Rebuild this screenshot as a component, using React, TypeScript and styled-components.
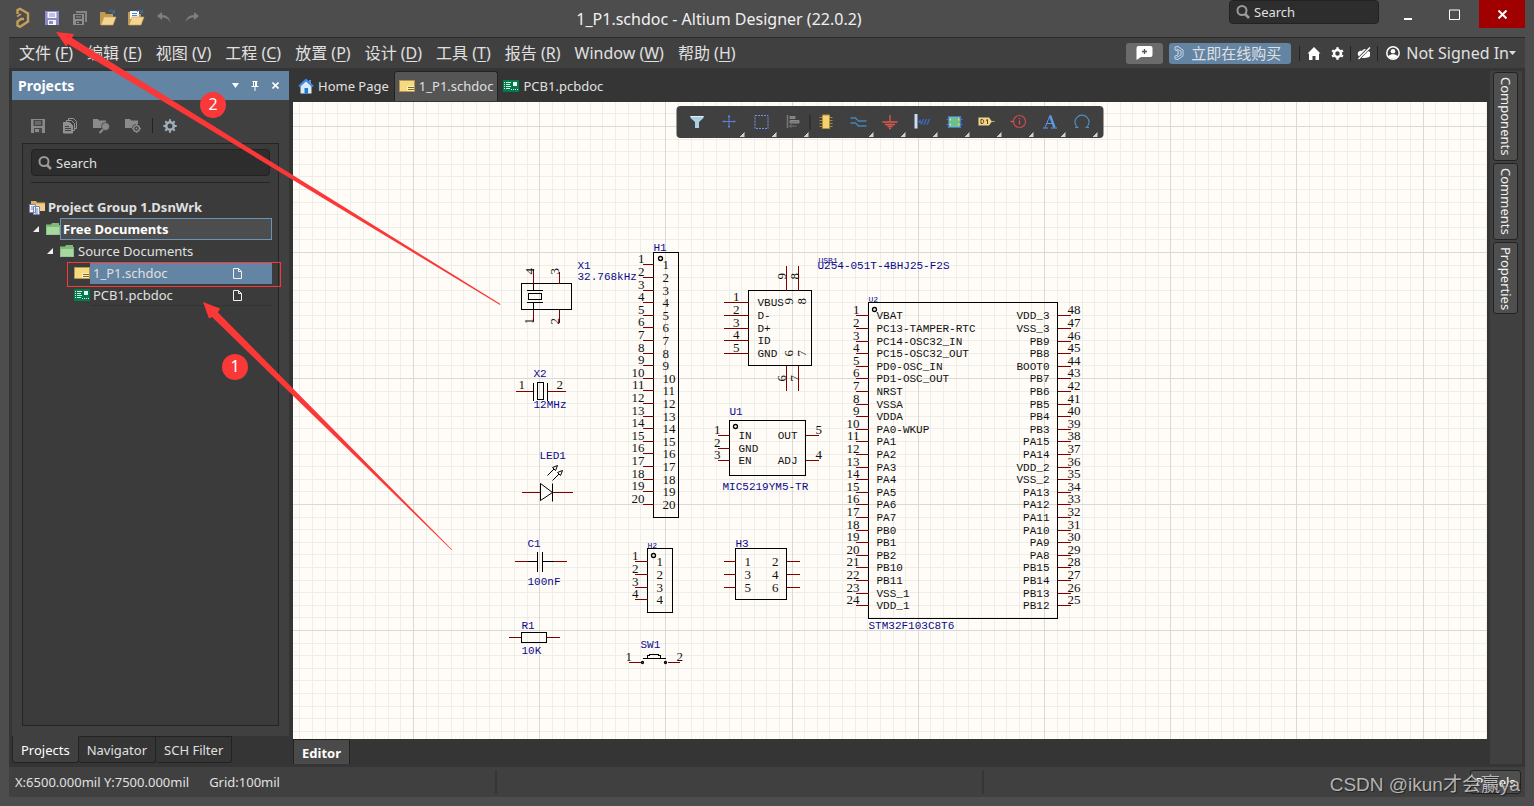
import React from "react";
import styled, { createGlobalStyle } from "styled-components";

const GlobalStyle = createGlobalStyle`
  * { box-sizing: border-box; }
  body {
    margin: 0;
    background: #4d4d4d;
    font-family: "Noto Sans", "Noto Sans CJK SC", sans-serif;
    font-size: 13px;
    color: #e0e0e0;
  }
  button, input { font: inherit; color: inherit; }
  button { background: none; border: 0; padding: 0; }
  svg { display: block; }
`;

const Page = styled.div`
  position: relative;
  display: flex;
  flex-direction: column;
  min-height: 100vh;
  padding: 0 9px 9px;
  overflow: hidden;
`;

/* ---------- title bar ---------- */

const TitleBar = styled.header`
  display: flex;
  align-items: flex-start;
  height: 37px;
`;

const QuickAccess = styled.div`
  display: flex;
  height: 35px;
  align-items: center;
`;

const IconButton = styled.button<{ $w?: number }>`
  display: flex;
  align-items: center;
  justify-content: center;
  width: ${(p) => p.$w ?? 28}px;
  height: 24px;
`;

const Title = styled.h1`
  flex: 1;
  margin: 0;
  padding-left: 4px;
  font-size: 16px;
  font-weight: 400;
  line-height: 38px;
  text-align: center;
  color: #f0f0f0;
`;

const SearchBox = styled.label<{ $compact?: boolean }>`
  display: flex;
  align-items: center;
  gap: 3px;
  width: ${(p) => (p.$compact ? "150px" : "auto")};
  height: ${(p) => (p.$compact ? 24 : 27)}px;
  padding: 0 5px;
  background: #2d2d2d;
  border: 1px solid #222;
  border-radius: 4px;
`;

const SearchInput = styled.input`
  min-width: 0;
  flex: 1;
  padding: 0;
  border: 0;
  outline: 0;
  background: none;
  font-size: 13px;
  &::placeholder { color: #e0e0e0; opacity: 1; }
`;

const WindowButtons = styled.div`
  display: flex;
  margin-left: 8px;
`;

const WindowButton = styled.button<{ $close?: boolean }>`
  display: flex;
  align-items: center;
  justify-content: center;
  width: 46px;
  height: 28px;
  padding-right: ${(p) => (p.$close ? 0 : 4)}px;
  background: ${(p) => (p.$close ? "#a00000" : "none")};
`;

/* ---------- application frame ---------- */

const Frame = styled.div`
  flex: 1;
  display: flex;
  flex-direction: column;
  border-top: 1px solid #2b2b2b;
  background: #353535;
`;

const MenuBar = styled.nav`
  display: flex;
  align-items: center;
  height: 30px;
  padding: 0 9px 0 10px;
  background: #404040;
  font-size: 16px;
`;

const MenuItems = styled.div`
  display: flex;
  flex: 1;
  gap: 14px;
`;

const MenuItem = styled.button`
  white-space: nowrap;
  line-height: 30px;
  u { text-underline-offset: 2px; }
`;

const NoteButton = styled.button`
  display: flex;
  align-items: center;
  justify-content: center;
  width: 37px;
  height: 21px;
  margin-right: 6px;
  border-radius: 3px;
  background: #6b6b6b;
`;

const BuyButton = styled.button`
  display: flex;
  align-items: center;
  gap: 7px;
  height: 21px;
  padding: 0 10px 0 5px;
  margin-right: 6px;
  border-radius: 3px;
  background: #6384a3;
  font-size: 15px;
  line-height: 20px;
`;

const Divider = styled.span<{ $m?: number }>`
  width: 1px;
  height: 15px;
  margin: 0 ${(p) => p.$m ?? 2}px;
  background: #222;
`;

const Account = styled.button`
  display: flex;
  align-items: center;
  gap: 6px;
  margin-left: 6px;
  white-space: nowrap;
`;

const AccountName = styled.span`
  display: flex;
  align-items: center;
`;

const Workspace = styled.main`
  flex: 1;
  display: flex;
  padding: 3px 3px 3px;
`;

/* ---------- projects panel ---------- */

const LeftDock = styled.aside`
  display: flex;
  flex-direction: column;
  width: 277px;
  flex: none;
  margin-right: 4px;
`;

const Panel = styled.section`
  flex: 1;
  display: flex;
  flex-direction: column;
  padding-bottom: 10px;
  background: #404040;
`;

const PanelHeader = styled.header`
  display: flex;
  align-items: center;
  height: 29px;
  padding: 0 4px 0 6px;
  background: #6384a3;
`;

const PanelTitle = styled.h2`
  flex: 1;
  margin: 0;
  font-size: 14px;
  color: #fff;
`;

const PanelTools = styled.div`
  display: flex;
  align-items: center;
  height: 43px;
  padding: 8px 0 0 10px;
`;

const PanelBox = styled.div`
  flex: 1;
  margin: 0 10px;
  padding: 5px 8px;
  border: 1px solid #242424;
  background: #3b3b3b;
`;

const PanelRule = styled.hr`
  height: 1px;
  margin: 6px 0 13px;
  border: 0;
  background: #242424;
`;

const Tree = styled.ul`
  margin: 0 -2px;
  padding: 0;
  list-style: none;
`;

const TreeRow = styled.li<{ $indent: number }>`
  display: flex;
  align-items: center;
  height: 22px;
  padding-left: ${(p) => p.$indent}px;
`;

const Twisty = styled.span`
  display: flex;
  justify-content: flex-end;
  width: 16px;
  padding-right: 7px;
`;

type LabelKind = "group" | "edit" | "folder" | "active" | "last";

const TreeLabel = styled.button<{ $kind: LabelKind }>`
  flex: 1;
  display: flex;
  align-items: center;
  justify-content: space-between;
  height: 22px;
  padding: 0 29px 0 ${(p) => (p.$kind === "group" ? 1 : p.$kind === "folder" ? 3 : 2)}px;
  border: 1px solid ${(p) => (p.$kind === "edit" ? "#6a93b8" : "transparent")};
  border-bottom-color: ${(p) =>
    p.$kind === "edit" ? "#6a93b8" : p.$kind === "last" ? "#333" : "transparent"};
  background: ${(p) =>
    p.$kind === "edit" ? "#4d4d4d" : p.$kind === "active" ? "#6384a3" : "none"};
  font-weight: ${(p) => (p.$kind === "group" || p.$kind === "edit" ? 700 : 400)};
  color: ${(p) => (p.$kind === "edit" ? "#fff" : "#e0e0e0")};
  text-align: left;
  line-height: 18px;
`;

const DockTabs = styled.div`
  display: flex;
  height: 28px;
`;

const DockTab = styled.button<{ $active?: boolean }>`
  height: 27px;
  padding: 0 8px;
  border: 1px solid #222;
  border-left-width: ${(p) => (p.$active ? 1 : 0)}px;
  border-top-color: ${(p) => (p.$active ? "#404040" : "#222")};
  border-radius: 0 0 3px 3px;
  background: ${(p) => (p.$active ? "#404040" : "#353535")};
  color: ${(p) => (p.$active ? "#fff" : "#e0e0e0")};
  white-space: nowrap;
`;

/* ---------- document area ---------- */

const Documents = styled.section`
  flex: 1;
  min-width: 0;
  display: flex;
  flex-direction: column;
`;

const DocTabs = styled.div`
  display: flex;
  height: 31px;
`;

const DocTab = styled.button<{ $active?: boolean }>`
  display: flex;
  align-items: center;
  gap: 4px;
  height: 30px;
  padding: 0 4px 1px;
  border: 1px solid ${(p) => (p.$active ? "#222" : "transparent")};
  border-width: 1px 1px 0;
  border-radius: 3px 3px 0 0;
  background: ${(p) => (p.$active ? "#555" : "none")};
  white-space: nowrap;
`;

const Canvas = styled.div`
  position: relative;
  flex: 1;
  min-height: 560px;
  background: #fffcf7;
`;

const Sheet = styled.svg`
  position: absolute;
  inset: 0;
  width: 100%;
  height: 100%;
`;

const ActiveBar = styled.div`
  position: absolute;
  top: 4px;
  left: 50%;
  transform: translateX(-50%);
  display: flex;
  align-items: center;
  height: 32px;
  padding: 0 5px;
  border-radius: 4px;
  background: #404040;
`;

const Tool = styled.button<{ $menu?: boolean }>`
  display: flex;
  align-items: center;
  justify-content: center;
  width: 32px;
  height: 32px;
  background: ${(p) =>
    p.$menu
      ? "linear-gradient(135deg, transparent 50%, #d0d0d0 50%) 26px 26px / 5px 5px no-repeat"
      : "none"};
`;

const EditorTabs = styled.div`
  height: 25px;
`;

const EditorTab = styled.button`
  height: 25px;
  padding: 1px 8px 0;
  border: 1px solid #222;
  border-bottom: 0;
  background: #4a4a4a;
  color: #fff;
  font-weight: 700;
`;

const RightDock = styled.aside`
  display: flex;
  flex-direction: column;
  gap: 2px;
  width: 32px;
  flex: none;
  margin-left: 3px;
  padding: 1px 4px 0 3px;
  background: #404040;
`;

const SideTab = styled.button<{ $h: number }>`
  display: flex;
  align-items: center;
  height: ${(p) => p.$h}px;
  padding: 4px 3px 0 4px;
  border: 1px solid #222;
  border-radius: 3px;
  background: #4f4f4f;
  color: #f0f0f0;
  writing-mode: vertical-rl;
  line-height: 16px;
`;

/* ---------- status bar ---------- */

const StatusBar = styled.footer`
  display: grid;
  grid-template-columns: 488px 487px 1fr auto;
  align-items: center;
  height: 30px;
  padding-right: 4px;
  background: #404040;
`;

const StatusCell = styled.div`
  display: flex;
  align-items: center;
  gap: 20px;
  height: 24px;
  padding-left: 6px;
  border-right: 2px solid #353535;
`;

const PanelsButton = styled.button`
  grid-column: 4;
  width: 51px;
  height: 24px;
  border: 1px solid #222;
  border-radius: 3px;
  background: #4f4f4f;
  color: #fff;
`;

const Watermark = styled.div`
  position: absolute;
  right: 14px;
  bottom: 8px;
  font-family: "Liberation Sans", "Noto Sans CJK SC", sans-serif;
  font-size: 19px;
  line-height: 26px;
  color: rgba(205, 205, 205, 0.85);
  text-shadow: 1px 1px 1px #222;
  pointer-events: none;
`;

const Annotations = styled.svg`
  position: absolute;
  top: 0;
  left: 0;
  pointer-events: none;
`;

/* ---------- icons ---------- */

const Magnifier = () => (
  <svg width="16" height="16" viewBox="0 0 16 16" fill="none" stroke="#9a9a9a" aria-hidden>
    <circle cx="7" cy="6.5" r="4.5" strokeWidth="2" />
    <path d="M10 10l4 4" strokeWidth="2.6" />
  </svg>
);

const Logo = () => (
  <svg width="18" height="22" viewBox="0 0 18 22" fill="none" stroke="#c3a05a" strokeWidth="2.4">
    <path d="M3.500 7V3L6 1.800l8 4.700v8L6 19.800 3.500 18.500v-4L7 12h3" />
    <path d="M3 9.500l4-2.500" strokeWidth="1.600" />
  </svg>
);

const Floppy = ({ a = "#8c8cc8", b = "#f4f4ff" }: { a?: string; b?: string }) => (
  <svg width="14" height="14" viewBox="0 0 14 14">
    <path d="M0 0h14v14H0z" fill={a} />
    <path d="M2.5 1h9v6h-9zM3 9h8v5H3z" fill={b} />
    <path d="M4 3h6M4 5h6" stroke={a} />
    <path d="M4 10h4v3H4z" fill={a} />
    <path d="M8.500 10h2v3h-2z" fill={b} />
  </svg>
);

const FloppyAll = () => (
  <svg width="16" height="16" viewBox="0 0 16 16" fill="none">
    <path d="M4 1h11v11h-2V3H4z" fill="#858585" />
    <path d="M1 4h11v11H1z" fill="#8e8e8e" />
    <path d="M3 5h7v4H3zM4 11h6v3H4z" fill="#4d4d4d" />
    <path d="M4 7h5M5 12.500h2" stroke="#9a9a9a" />
  </svg>
);

const FolderOpen = ({ doc }: { doc?: boolean }) => (
  <svg width="18" height="17" viewBox="0 0 18 17">
    <path d="M1 3h5l1 2h7v4H5l-3 7H1z" fill="#c09a50" />
    {doc && <path d="M3 2h9v8H3z" fill="#f4f7ff" />}
    {doc && <path d="M5 4.500h5M5 6.500h5" stroke="#5a86c0" />}
    <path d="M5 8h12l-3 8H2z" fill="#f4d592" stroke="#c9a45b" strokeWidth=".6" />
    <path d="M10 2.500c2-2 4-1.500 5 .5M15.500.8v2.800h-3" fill="none" stroke="#3f6c98" strokeWidth="1.200" />
  </svg>
);

const Undo = ({ flip }: { flip?: boolean }) => (
  <svg width="16" height="14" viewBox="0 0 16 14">
    <g transform={flip ? "matrix(-1 0 0 1 16 0)" : undefined}>
      <path d="M1 5l5-4v3c5 0 8 3 8.500 8C13 8 10 6.500 6 6.500V9z" fill="#7f7f7f" />
    </g>
  </svg>
);

const Copies = () => (
  <svg width="14" height="16" viewBox="0 0 14 16" fill="none" stroke="#949494">
    <path d="M5.500 2.500v-2h5l3 3v7h-2" />
    <path d="M3.500 4.500v-2h5l3 3v7h-2" />
    <path d="M.5 4.500h6l3 3v7.500h-9z" fill="#8e8e8e" />
    <path d="M2 8.500h4M2 10.500h6M2 12.500h6" stroke="#444" />
  </svg>
);

const FolderTool = ({ gear }: { gear?: boolean }) => (
  <svg width="17" height="16" viewBox="0 0 17 16" fill="#8a8a8a">
    <path d="M0 1h5l1 1.500h7V10H0z" />
    {gear ? (
      <g>
        <circle cx="11.500" cy="10.500" r="4.500" fill="#404040" />
        <circle cx="11.500" cy="10.500" r="3" fill="none" stroke="#8a8a8a" strokeWidth="1.600" />
        <circle cx="11.500" cy="10.500" r="1" />
        <path d="M11.500 6v9M7 10.500h9" stroke="#8a8a8a" strokeDasharray="1.500 6" />
      </g>
    ) : (
      <g>
        <circle cx="12.500" cy="8.500" r="4" stroke="#404040" strokeWidth=".8" />
        <path d="M10 11.500l-3.500 3.500" stroke="#8a8a8a" strokeWidth="2" />
      </g>
    )}
  </svg>
);

const Gear = ({ color, size = 14 }: { color: string; size?: number }) => (
  <svg width={size} height={size} viewBox="0 0 14 14" fill="none" stroke={color}>
    <circle cx="7" cy="7" r="3.700" strokeWidth="2.600" />
    <path
      d="M7 .3v2M7 11.700v2M1.200 3.700l1.700 1M11.100 9.300l1.700 1M1.200 10.300l1.700-1M11.100 4.700l1.700-1"
      strokeWidth="2.600"
    />
  </svg>
);

const FineGear = () => (
  <svg width="14" height="14" viewBox="0 0 14 14" fill="none" stroke="#9fb0bb">
    <circle cx="7" cy="7" r="3.800" strokeWidth="2.600" />
    <path
      d="M7 .3v2M7 11.700v2M.3 7h2M11.700 7h2M2.300 2.300l1.400 1.400M10.300 10.300l1.400 1.400M2.300 11.700l1.400-1.400M10.300 3.700l1.400-1.400"
      strokeWidth="2"
    />
  </svg>
);

const SchIcon = () => (
  <svg width="16" height="12" viewBox="0 0 16 12">
    <path d="M.5.5h15v11H.5z" fill="#f3da83" stroke="#b89548" />
    <path d="M8 6h7v5H8z" fill="#fff0b0" />
    <path d="M9 7.500h6M9 9.500h6" stroke="#7d6632" />
  </svg>
);

const PcbIcon = () => (
  <svg width="16" height="12" viewBox="0 0 16 12">
    <path d="M0 0h16v12H0z" fill="#067a4d" />
    <path d="M10 2h4v4h-4z" fill="#e8fff2" />
    <path
      d="M1 2.500h1M3 2.500h5M1 4.500h1M3 4.500h4M1 6.500h1M3 6.500h5M1 8.500h1M3 8.500h4M8 9.500h1M10 9.500h1M12 9.500h1M14 9.500h1"
      stroke="#c7f5dc"
    />
  </svg>
);

const GreenFolder = () => (
  <svg width="14" height="12" viewBox="0 0 14 12">
    <path d="M0 1.500h5L6 0h7v2h1v10H0z" fill="#7fba7b" />
    <path d="M1 4h12l.5 7.500H.5z" fill="#a6d9a0" />
  </svg>
);

const GroupIcon = () => (
  <svg width="17" height="15" viewBox="0 0 17 15">
    <path d="M2 1h5l1 1.500h8V11H2z" fill="#dcae62" />
    <path d="M4 4h12v7H4z" fill="#f0cf8d" />
    <path d="M.5 4.500h6v8h-6zM4.500 6.500h6v8h-6z" fill="#eef2ff" stroke="#7b86ad" />
    <path d="M6 9h3M6 11h3M6 13h3M2 7h2M2 9h2" stroke="#7b86ad" />
  </svg>
);

const Expanded = () => (
  <svg width="6" height="6" viewBox="0 0 6 6">
    <path d="M6 0v6H0z" fill="#f0f0f0" />
  </svg>
);

const FileIcon = () => (
  <svg width="9" height="11" viewBox="0 0 9 11" fill="none" stroke="#f0f0f0">
    <path d="M.5.5h5l3 3v7h-8zM5.500.5v3h3" />
  </svg>
);

const HomeColor = () => (
  <svg width="16" height="16" viewBox="0 0 16 16">
    <path d="M11 2h2v5h-2z" fill="#7c93ad" />
    <path d="M2.500 8L8 3l5.500 5v7.500h-11z" fill="#dce9f7" />
    <path d="M6.500 10h3.500v5.500H6.500z" fill="#1d78e0" />
    <path d="M1 8.500L8 1.800l7 6.700" fill="none" stroke="#3a8df0" strokeWidth="2" />
  </svg>
);

const Note = () => (
  <svg width="17" height="14" viewBox="0 0 17 14">
    <path d="M2.500 0h12A2 2 0 0 1 16.500 2v7a2 2 0 0 1-2 2H5l-4.500 3V2a2 2 0 0 1 2-2z" fill="#fff" />
    <path d="M8.500 3v5M6 5.500h5" stroke="#555" strokeWidth="1.400" />
  </svg>
);

const HomeWhite = () => (
  <svg width="14" height="13" viewBox="0 0 14 13" fill="#fff">
    <path d="M7 0l6.500 6.500H12V13H8.500V9h-3v4H2V6.500H.5z" />
  </svg>
);

const SyncOff = () => (
  <svg width="14" height="13" viewBox="0 0 14 13">
    <path d="M1 8c-1-3 2-5 4-4 2-3 6-2 6 0l2 1v4c-1 2-6 2-10 2z" fill="#fff" />
    <path d="M1 12.500L12.500.5" stroke="#404040" strokeWidth="3" />
    <path d="M1.500 12L13 .5" stroke="#fff" strokeWidth="1.500" />
  </svg>
);

const User = () => (
  <svg width="14" height="14" viewBox="0 0 14 14">
    <circle cx="7" cy="7" r="6.200" fill="none" stroke="#fff" strokeWidth="1.500" />
    <circle cx="7" cy="5.200" r="2.300" fill="#fff" />
    <path d="M2.500 10c2-2.500 7-2.500 9 0-2 3.500-7 3.500-9 0z" fill="#fff" />
  </svg>
);

const BuyMark = () => (
  <svg width="10" height="14" viewBox="0 0 10 14" fill="none" stroke="#c8d6e4">
    <path d="M1 4V1l3-.5L9 4v6l-5 3.500L1 13v-3l3-1V5z" />
    <path d="M2.500 3L7 5v4l-4.500 2.500M4 7h1" />
  </svg>
);

const toolIcons: { name: string; menu?: boolean; art: React.ReactNode }[] = [
  {
    name: "Filter",
    art: (
      <g>
        <path d="M2 3h13v2L10.500 9v6h-4V9L2 5z" fill="#a9cfe0" />
        <path d="M2 3.500h13" stroke="#dff1fa" />
      </g>
    ),
  },
  {
    name: "Move",
    menu: true,
    art: <path d="M8.500 2v13M2 8.500h13M7.500 3.500h2M7.500 13.500h2M3.500 7.500v2M13.500 7.500v2" stroke="#5f83d8" fill="none" />,
  },
  {
    name: "Select area",
    menu: true,
    art: <path d="M2.500 2.500h13v13h-13z" stroke="#6f90ea" strokeDasharray="2 1" fill="none" />,
  },
  {
    name: "Align",
    menu: true,
    art: (
      <g>
        <path d="M3 2v13" stroke="#777" strokeWidth="1.500" />
        <path d="M5.500 3.500h5v2h-5zM5.500 7.500h9v2.500h-9z" fill="#777" stroke="#8c8c8c" />
        <path d="M5 13h7M7 11.500L5 13l2 1.500" stroke="#777" fill="none" />
      </g>
    ),
  },
  {
    name: "Part",
    art: (
      <g>
        <path d="M2 4.500h13M2 7.500h13M2 10.500h13M2 13.500h13" stroke="#a98638" />
        <path d="M5 2h7v13.500H5z" fill="#f6d271" stroke="#b48f3e" />
      </g>
    ),
  },
  {
    name: "Wire",
    menu: true,
    art: <path d="M1 5h5l3 3h8M1 10h5l3 3h8" stroke="#4a83b5" strokeWidth="1.400" fill="none" />,
  },
  {
    name: "Ground",
    menu: true,
    art: <path d="M8.500 2v7M1 9h15M3.500 11.500h10M6 13.500h5M7.500 15.500h2" stroke="#e4554c" strokeWidth="1.300" />,
  },
  {
    name: "Harness",
    menu: true,
    art: (
      <g>
        <path d="M1 1h3v14.500H1z" fill="#c9dcf7" />
        <path
          d="M4 8.500h3.500M6.500 6.500v4M8 11l2-5M11 11l2-5M14 11l2-5M7 11h1.500M10 11h1.500M13 11h1.500"
          stroke="#3f6cd0"
          strokeWidth="1.200"
        />
      </g>
    ),
  },
  {
    name: "Sheet symbol",
    menu: true,
    art: (
      <g>
        <path d="M3 3.500h12v11H3z" fill="#6cc08e" stroke="#4676d8" strokeWidth="1.200" />
        <path d="M1 6.500h3M1 11.500h3M14 6.500h3M14 11.500h3" stroke="#4676d8" />
        <path d="M4 6.500h1.500M4 11.500h1.500M12.500 6.500H14M12.500 11.500H14" stroke="#f0e060" strokeWidth="2" />
      </g>
    ),
  },
  {
    name: "Port",
    menu: true,
    art: (
      <g>
        <path d="M1 4.500h10.500l3 4-3 4H1z" fill="#f2d58a" />
        <path d="M14 8.500h3" stroke="#d2a94f" />
        <path d="M3.500 6.500v4h1.500c1.500 0 1.500-4 0-4zM8.500 7.500l1.500-1v4.500" stroke="#5b4520" fill="none" />
      </g>
    ),
  },
  {
    name: "Directive",
    menu: true,
    art: (
      <g>
        <circle cx="10" cy="8.500" r="6" stroke="#c94a4a" strokeWidth="1.200" fill="none" />
        <path d="M1 8.500h3M10 7.500v4M10 5v1.300" stroke="#d84e4e" strokeWidth="1.400" />
      </g>
    ),
  },
  {
    name: "Text",
    menu: true,
    art: (
      <g fill="none" stroke="#5c9ae6">
        <path d="M3.500 14.500L8.500 2.500" />
        <path d="M8.500 2.500l4.500 12" strokeWidth="2.400" />
        <path d="M5.500 10.500h6M1.500 15h5M9.500 15h6" />
      </g>
    ),
  },
  {
    name: "Arc",
    menu: true,
    art: <path d="M1.500 14.500h2.500A7 7 0 1 1 13 14.500h2.500" stroke="#4f8cc4" strokeWidth="1.200" fill="none" />,
  },
];

/* ---------- schematic ---------- */

const INK = "#111";
const WIRE = "#800000";
const NAVY = "#0a0a8c";
const PITCH = 12.6;

const Label = styled.text`
  font-family: "Liberation Mono", monospace;
  font-size: 11px;
  fill: ${INK};
`;

const Designator = styled(Label)`
  fill: ${NAVY};
`;

const TinyDesignator = styled(Designator)`
  font-size: 8px;
`;

const PinNumber = styled.text`
  font-family: "Liberation Serif", serif;
  font-size: 13px;
  fill: ${INK};
`;

const row = (y: number, i: number) => Math.round(y + i * PITCH);

const Wire = ({ d, c = WIRE }: { d: string; c?: string }) => (
  <path d={d} stroke={c} fill="none" shapeRendering="crispEdges" />
);

const Body = ({ x, y, w, h }: { x: number; y: number; w: number; h: number }) => (
  <rect x={x} y={y} width={w} height={h} fill="none" stroke="#000" shapeRendering="crispEdges" />
);

const Dot = ({ x, y, r = 2 }: { x: number; y: number; r?: number }) => (
  <circle cx={x} cy={y} r={r} fill="none" stroke="#000" strokeWidth="1.300" />
);

type PinsProps = {
  x: number;
  y: number;
  len: number;
  numbers?: (number | null)[];
  labels: (string | null)[];
  side?: "left" | "right";
  numberGap: number;
  labelGap: number;
  digits?: boolean;
};

const Pins = ({ x, y, len, numbers, labels, side = "left", numberGap, labelGap, digits }: PinsProps) => {
  const dir = side === "left" ? -1 : 1;
  const Text = digits ? PinNumber : Label;
  return (
    <g>
      {labels.map((l, i) => {
        if (l === null) return null;
        const py = row(y, i);
        return (
          <g key={i}>
            <Wire d={`M${x} ${py}h${dir * len}`} />
            {numbers && (
              <PinNumber x={x + dir * numberGap} y={py - 2} textAnchor={side === "left" ? "end" : "start"}>
                {numbers[i]}
              </PinNumber>
            )}
            <Text x={x - dir * labelGap} y={py + (digits ? 4 : 3)} textAnchor={side === "left" ? "start" : "end"}>
              {l}
            </Text>
          </g>
        );
      })}
    </g>
  );
};

const Turned = ({ x, y, children }: { x: number; y: number; children: React.ReactNode }) => (
  <PinNumber transform={`translate(${x} ${y}) rotate(-90)`}>{children}</PinNumber>
);

const count = (n: number) => Array.from({ length: n }, (_, i) => i + 1);

const mcuLeft =
  "VBAT PC13-TAMPER-RTC PC14-OSC32_IN PC15-OSC32_OUT PD0-OSC_IN PD1-OSC_OUT NRST VSSA VDDA PA0-WKUP PA1 PA2 PA3 PA4 PA5 PA6 PA7 PB0 PB1 PB2 PB10 PB11 VSS_1 VDD_1".split(
    " "
  );
const mcuRight =
  "VDD_3 VSS_3 PB9 PB8 BOOT0 PB7 PB6 PB5 PB4 PB3 PA15 PA14 VDD_2 VSS_2 PA13 PA12 PA11 PA10 PA9 PA8 PB15 PB14 PB13 PB12".split(
    " "
  );

const GridLines = () => {
  const minor: string[] = [];
  const major: string[] = [];
  for (let i = -10; i < 240; i++) {
    const d = `M${Math.round(413 + i * 12.62)} 0v3000`;
    (i % 10 === 0 ? major : minor).push(d);
  }
  for (let i = -2; i < 200; i++) {
    const d = `M0 ${Math.round(126 + i * 12.6)}h4000`;
    (i % 10 === 0 ? major : minor).push(d);
  }
  return (
    <g fill="none" shapeRendering="crispEdges">
      <path d={minor.join("")} stroke="#ededea" />
      <path d={major.join("")} stroke="#d9d9d6" />
    </g>
  );
};

const Schematic = () => (
  <Sheet aria-label="Schematic sheet">
    <g transform="translate(-292.500 -101.500)">
      <GridLines />

      <Body x={521} y={283} w={50} h={26} />
      <Wire d="M533 268v15M559 271v12M533 309v12M559 309v13" />
      <Wire c="#000" d="M533 283v7M526 290h16M528 293h13v6h-13zM526 302h16M533 302v7" />
      <Turned x={533} y={274}>4</Turned>
      <Turned x={558} y={274}>3</Turned>
      <Turned x={532} y={324}>1</Turned>
      <Turned x={558} y={324}>2</Turned>
      <Designator x={577} y={268}>X1</Designator>
      <Designator x={577} y={279}>32.768kHz</Designator>

      <Wire d="M515 391h18M547 391h18" />
      <Wire c="#000" d="M533 382v18M547 382v18M537 382h6v17h-6z" />
      <PinNumber x={518} y={388}>1</PinNumber>
      <PinNumber x={556} y={388}>2</PinNumber>
      <Designator x={533} y={376}>X2</Designator>
      <Designator x={533} y={407}>12MHz</Designator>

      <Designator x={539} y={458}>LED1</Designator>
      <Wire d="M521 492h19M552 492h20" />
      <path d="M540 483v17l12-8zM552 483v18" fill="none" stroke="#000" />
      <path d="M547 475l9-9M552 480l9-9" stroke="#000" />
      <path d="M557 465l-2 5-3-3zM562 470l-2 5-3-3z" fill="#fff" stroke="#000" />

      <Designator x={527} y={546}>C1</Designator>
      <Wire d="M514 561h13M553 561h13" />
      <Wire c="#000" d="M527 561h10M542 561h11M537 551v20M542 551v20" />
      <Designator x={527} y={584}>100nF</Designator>

      <Designator x={521} y={628}>R1</Designator>
      <Wire d="M508 637h13M546 637h13" />
      <Body x={521} y={632} w={25} h={10} />
      <Designator x={521} y={653}>10K</Designator>

      <Designator x={653} y={250}>H1</Designator>
      <Body x={653} y={252} w={25} h={265} />
      <Dot x={660} y={258} />
      <Pins x={653} y={264.4} len={11} numbers={count(20)} labels={count(20).map(String)} numberGap={9} labelGap={9} digits />

      <TinyDesignator x={647} y={547}>H2</TinyDesignator>
      <Body x={647} y={548} w={25} h={64} />
      <Dot x={653} y={555} />
      <Pins x={647} y={561.3} len={13} numbers={count(4)} labels={count(4).map(String)} numberGap={9} labelGap={9} digits />

      <Designator x={640} y={647}>SW1</Designator>
      <Wire d="M628 662h12M667 662h12" />
      <Wire c="#000" d="M642 658h23M647 658v-3h2v-1h9v1h2v3" />
      <Dot x={642} y={662} r={1} />
      <Dot x={665} y={662} r={1} />
      <PinNumber x={625} y={660}>1</PinNumber>
      <PinNumber x={676} y={660}>2</PinNumber>

      <Body x={748} y={290} w={63} h={75} />
      <Wire d="M786 265v25M798 265v25M786 365v25M798 365v25" />
      <Pins x={748} y={302.4} len={25} numbers={count(5)} labels={["VBUS", "D-", "D+", "ID", "GND"]} numberGap={9} labelGap={9} />
      <Turned x={785} y={279}>9</Turned>
      <Turned x={798} y={279}>8</Turned>
      <Turned x={792} y={304}>9</Turned>
      <Turned x={805} y={304}>8</Turned>
      <Turned x={792} y={356}>6</Turned>
      <Turned x={805} y={356}>7</Turned>
      <Turned x={785} y={381}>6</Turned>
      <Turned x={798} y={381}>7</Turned>
      <TinyDesignator x={818} y={262}>USB1</TinyDesignator>
      <Designator x={817} y={268}>U254-051T-4BHJ25-F2S</Designator>

      <Designator x={729} y={414}>U1</Designator>
      <Body x={729} y={420} w={76} h={55} />
      <Dot x={735} y={426} />
      <Pins x={729} y={435} len={12} numbers={count(3)} labels={["IN", "GND", "EN"]} numberGap={9} labelGap={9} />
      <Pins x={805} y={435} len={13} side="right" numbers={[5, null, 4]} labels={["OUT", null, "ADJ"]} numberGap={10} labelGap={8} />
      <Designator x={722} y={489}>MIC5219YM5-TR</Designator>

      <Designator x={735} y={546}>H3</Designator>
      <Body x={735} y={548} w={51} h={51} />
      <Pins x={735} y={561.3} len={12} labels={["1", "3", "5"]} numberGap={0} labelGap={9} digits />
      <Pins x={786} y={561.3} len={13} side="right" labels={["2", "4", "6"]} numberGap={0} labelGap={8} digits />

      <TinyDesignator x={868} y={301}>U2</TinyDesignator>
      <Body x={868} y={302} w={189} h={316} />
      <Dot x={874} y={309} />
      <Pins x={868} y={315.4} len={13} numbers={count(24)} labels={mcuLeft} numberGap={9} labelGap={8} />
      <Pins
        x={1057}
        y={315.4}
        len={13}
        side="right"
        numbers={count(24).map((n) => 49 - n)}
        labels={mcuRight}
        numberGap={10}
        labelGap={8}
      />
      <Designator x={868} y={628}>STM32F103C8T6</Designator>
    </g>
  </Sheet>
);

/* ---------- page ---------- */

const menus: [string, string][] = [
  ["文件", "F"],
  ["编辑", "E"],
  ["视图", "V"],
  ["工程", "C"],
  ["放置", "P"],
  ["设计", "D"],
  ["工具", "T"],
  ["报告", "R"],
  ["Window", "W"],
  ["帮助", "H"],
];

const Badge = styled.text`
  font-size: 16px;
  fill: #fff;
  text-anchor: middle;
`;

export default function App() {
  return (
    <>
      <GlobalStyle />
      <Page>
        <TitleBar>
          <QuickAccess>
            <IconButton aria-label="Altium"><Logo /></IconButton>
            <IconButton $w={29} aria-label="Save"><Floppy /></IconButton>
            <IconButton aria-label="Save all"><FloppyAll /></IconButton>
            <IconButton aria-label="Open"><FolderOpen /></IconButton>
            <IconButton aria-label="Open project"><FolderOpen doc /></IconButton>
            <IconButton aria-label="Undo"><Undo /></IconButton>
            <IconButton $w={27} aria-label="Redo"><Undo flip /></IconButton>
          </QuickAccess>
          <Title>1_P1.schdoc - Altium Designer (22.0.2)</Title>
          <SearchBox $compact>
            <Magnifier />
            <SearchInput placeholder="Search" aria-label="Search commands" />
          </SearchBox>
          <WindowButtons>
            <WindowButton aria-label="Minimize">
              <svg width="8" height="12"><path d="M0 11h8" stroke="#fff" strokeWidth="2" /></svg>
            </WindowButton>
            <WindowButton aria-label="Maximize">
              <svg width="11" height="11"><path d="M.5 1h10v9.500H.5z" fill="none" stroke="#fff" /></svg>
            </WindowButton>
            <WindowButton $close aria-label="Close">
              <svg width="9" height="9"><path d="M.5.5l8 8M8.500.5l-8 8" stroke="#fff" strokeWidth="2" /></svg>
            </WindowButton>
          </WindowButtons>
        </TitleBar>

        <Frame>
          <MenuBar>
            <MenuItems>
              {menus.map(([name, key]) => (
                <MenuItem key={key}>
                  {name} (<u>{key}</u>)
                </MenuItem>
              ))}
            </MenuItems>
            <NoteButton aria-label="Comment"><Note /></NoteButton>
            <BuyButton><BuyMark />立即在线购买</BuyButton>
            <Divider />
            <IconButton $w={24} aria-label="Home"><HomeWhite /></IconButton>
            <IconButton $w={22} aria-label="Settings"><Gear color="#fff" size={13} /></IconButton>
            <Divider />
            <IconButton $w={22} aria-label="Offline"><SyncOff /></IconButton>
            <Divider />
            <Account>
              <User />
              <AccountName>
                Not Signed In
                <svg width="7" height="4"><path d="M0 0h7L3.500 4z" fill="#ddd" /></svg>
              </AccountName>
            </Account>
          </MenuBar>

          <Workspace>
            <LeftDock>
              <Panel>
                <PanelHeader>
                  <PanelTitle>Projects</PanelTitle>
                  <IconButton $w={20} aria-label="Panel menu">
                    <svg width="7" height="5"><path d="M0 0h7L3.500 5z" fill="#fff" /></svg>
                  </IconButton>
                  <IconButton $w={20} aria-label="Pin panel">
                    <svg width="8" height="10" fill="none" stroke="#fff">
                      <path d="M1.500.5h5M2.500.5v5M5.500.5v5M.5 5.500h7M4 6v4" />
                      <path d="M5 0v6" strokeWidth="2" />
                    </svg>
                  </IconButton>
                  <IconButton $w={20} aria-label="Close panel">
                    <svg width="7" height="7"><path d="M.5.5l6 6M6.500.5l-6 6" stroke="#fff" strokeWidth="1.600" /></svg>
                  </IconButton>
                </PanelHeader>
                <PanelTools>
                  <IconButton $w={32} aria-label="Save document"><Floppy a="#8a8a8a" b="#484848" /></IconButton>
                  <IconButton $w={31} aria-label="Copy"><Copies /></IconButton>
                  <IconButton $w={32} aria-label="Find in folder"><FolderTool /></IconButton>
                  <IconButton $w={32} aria-label="Folder options"><FolderTool gear /></IconButton>
                  <Divider $m={3} />
                  <IconButton aria-label="Panel settings"><FineGear /></IconButton>
                </PanelTools>
                <PanelBox>
                  <SearchBox>
                    <Magnifier />
                    <SearchInput placeholder="Search" aria-label="Search projects" />
                  </SearchBox>
                  <PanelRule />
                  <Tree>
                    <TreeRow $indent={0}>
                      <GroupIcon />
                      <TreeLabel $kind="group">Project Group 1.DsnWrk</TreeLabel>
                    </TreeRow>
                    <TreeRow $indent={1}>
                      <Twisty><Expanded /></Twisty>
                      <GreenFolder />
                      <TreeLabel $kind="edit">Free Documents</TreeLabel>
                    </TreeRow>
                    <TreeRow $indent={15}>
                      <Twisty><Expanded /></Twisty>
                      <GreenFolder />
                      <TreeLabel $kind="folder">Source Documents</TreeLabel>
                    </TreeRow>
                    <TreeRow $indent={45}>
                      <SchIcon />
                      <TreeLabel $kind="active">1_P1.schdoc<FileIcon /></TreeLabel>
                    </TreeRow>
                    <TreeRow $indent={45}>
                      <PcbIcon />
                      <TreeLabel $kind="last">PCB1.pcbdoc<FileIcon /></TreeLabel>
                    </TreeRow>
                  </Tree>
                </PanelBox>
              </Panel>
              <DockTabs>
                <DockTab $active>Projects</DockTab>
                <DockTab>Navigator</DockTab>
                <DockTab>SCH Filter</DockTab>
              </DockTabs>
            </LeftDock>

            <Documents>
              <DocTabs>
                <DocTab><HomeColor />Home Page</DocTab>
                <DocTab $active><SchIcon />1_P1.schdoc</DocTab>
                <DocTab><PcbIcon />PCB1.pcbdoc</DocTab>
              </DocTabs>
              <Canvas>
                <Schematic />
                <ActiveBar>
                  {toolIcons.map((t, i) => (
                    <React.Fragment key={t.name}>
                      {i === 4 && <Divider $m={0} />}
                      <Tool $menu={t.menu} aria-label={t.name}>
                        <svg width="18" height="18" viewBox="0 0 18 18">{t.art}</svg>
                      </Tool>
                    </React.Fragment>
                  ))}
                </ActiveBar>
              </Canvas>
              <EditorTabs>
                <EditorTab>Editor</EditorTab>
              </EditorTabs>
            </Documents>

            <RightDock>
              <SideTab $h={89}>Components</SideTab>
              <SideTab $h={77}>Comments</SideTab>
              <SideTab $h={72}>Properties</SideTab>
            </RightDock>
          </Workspace>

          <StatusBar>
            <StatusCell>
              <span>X:6500.000mil Y:7500.000mil</span>
              <span>Grid:100mil</span>
            </StatusCell>
            <StatusCell />
            <PanelsButton>Panels</PanelsButton>
          </StatusBar>
        </Frame>

        <Watermark>CSDN @ikun才会赢ya</Watermark>

        <Annotations width="520" height="570" fill="#fa3838">
          <path d="M56 32L74 34L72 38L500.500 304L500 305L68 44L66 46.500z" />
          <path d="M203 302L220 308.500L218 312.500L452 549.500L451.500 550L212 317L209 318.500z" />
          <rect x="67.500" y="262.500" width="213" height="24" fill="none" stroke="#fa3838" />
          <circle cx="213" cy="105" r="13" />
          <circle cx="235" cy="367" r="13" />
          <Badge x="213" y="110">2</Badge>
          <Badge x="235" y="372">1</Badge>
        </Annotations>
      </Page>
    </>
  );
}
